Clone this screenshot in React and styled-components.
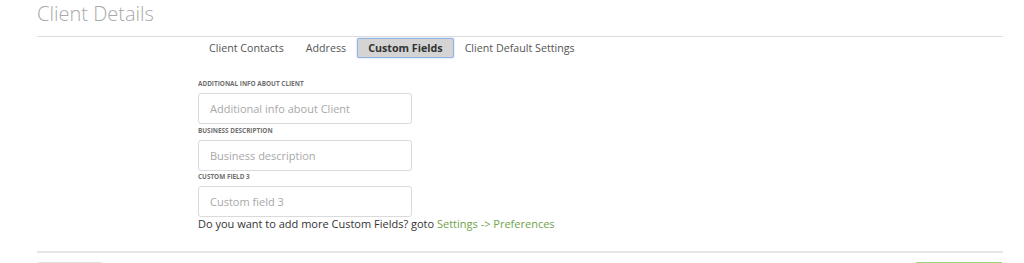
import React from "react";
import styled, { createGlobalStyle } from "styled-components";

const GlobalStyle = createGlobalStyle`
  html, body {
    margin: 0;
    padding: 0;
    background: #fff;
    font-family: "Open Sans", "Liberation Sans", sans-serif;
  }
`;

const Page = styled.div`
  padding: 0 21px 0 37px;
  height: 263px;
  overflow: hidden;
`;

const Title = styled.h2`
  margin: 0;
  height: 28px;
  line-height: 28px;
  font-size: 20px;
  font-weight: 300;
  color: #a9a9a9;
  border-bottom: 1px solid #dcdcdc;
  padding-bottom: 8px;
`;

const Content = styled.div`
  padding-left: 161px;
`;

const Tabs = styled.div`
  display: flex;
  margin-top: 1px;
`;

const Tab = styled.div`
  height: 18px;
  line-height: 18px;
  padding: 0 10px;
  font-size: 10.7px;
  border: 1px solid ${(p) => (p.active ? "#8fb4e3" : "transparent")};
  border-radius: 2px;
  background: ${(p) => (p.active ? "#d4d4d4" : "transparent")};
  color: ${(p) => (p.active ? "#333" : "#555")};
  font-weight: ${(p) => (p.active ? 700 : 400)};
  box-shadow: ${(p) => (p.active ? "0 0 2px rgba(120,160,220,0.6)" : "none")};
`;

const Form = styled.div`
  margin-top: 21px;
  width: 214px;
`;

const Field = styled.div`
  margin-bottom: 1px;
  &:first-child {
    margin-bottom: 2px;
  }
  &:last-child {
    margin-bottom: 0;
  }
`;

const Label = styled.div`
  font-size: 6.4px;
  font-weight: 700;
  line-height: 10px;
  height: 10px;
  color: #6f6f6f;
  text-transform: uppercase;
  margin-bottom: 4px;
`;

const Input = styled.input`
  box-sizing: border-box;
  display: block;
  width: 214px;
  height: 31px;
  border: 1px solid #dadada;
  border-radius: 3px;
  padding: 0 11px;
  font-family: inherit;
  font-size: 11px;
  color: #555;
  outline: none;
  &::placeholder {
    color: #a8a8a8;
  }
`;

const Help = styled.div`
  width: 600px;
  font-size: 11px;
  line-height: 14px;
  color: #333;
`;

const Link = styled.a`
  color: #6fa34a;
  text-decoration: none;
`;

const Footer = styled.div`
  margin-top: 20px;
  border-top: 2px solid #e6e6e6;
  padding-top: 9px;
  display: flex;
  justify-content: space-between;
`;

const FooterButton = styled.button`
  width: ${(p) => p.w}px;
  height: 30px;
  border: 1px solid ${(p) => (p.primary ? "#9bd47c" : "#e2e2e2")};
  border-radius: 2px;
  background: #fff;
`;

const fields = [
  { label: "Additional info about Client", placeholder: "Additional info about Client" },
  { label: "Business description", placeholder: "Business description" },
  { label: "Custom field 3", placeholder: "Custom field 3" },
];

const tabs = ["Client Contacts", "Address", "Custom Fields", "Client Default Settings"];

export default function App() {
  return (
    <>
      <GlobalStyle />
      <Page>
        <Title>Client Details</Title>
        <Content>
          <Tabs>
            {tabs.map((t) => (
              <Tab key={t} active={t === "Custom Fields"}>
                {t}
              </Tab>
            ))}
          </Tabs>
          <Form>
            {fields.map((f) => (
              <Field key={f.label}>
                <Label>{f.label}</Label>
                <Input placeholder={f.placeholder} />
              </Field>
            ))}
          </Form>
          <Help>
            Do you want to add more Custom Fields? goto <Link href="#">Settings -&gt; Preferences</Link>
          </Help>
        </Content>
        <Footer>
          <FooterButton w={66} aria-label="Cancel" />
          <FooterButton w={88} primary aria-label="Save" />
        </Footer>
      </Page>
    </>
  );
}
